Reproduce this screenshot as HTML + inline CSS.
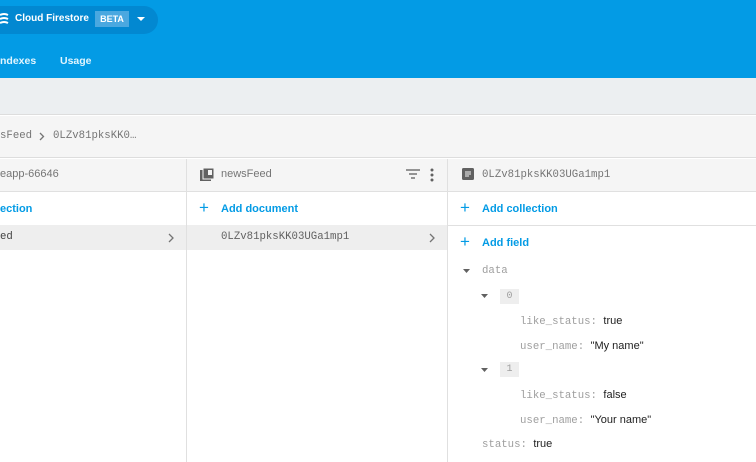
<!DOCTYPE html>
<html><head><style>
*{margin:0;padding:0;box-sizing:border-box}
body{width:756px;height:462px;overflow:hidden;background:#fff;font-family:"Liberation Sans",sans-serif;position:relative}
.a{position:absolute;white-space:nowrap}
.mono{font-family:"Liberation Mono",monospace}
.blue{color:#039be5;font-weight:bold;font-size:11px}
.plus{color:#039be5;font-size:17px;font-weight:normal}
.g{color:#9e9e9e}
.v{color:#212121;font-size:11px;font-family:"Liberation Sans",sans-serif}
</style></head><body>
<div class="a" style="left:0;top:0;width:756px;height:78px;background:#039be5"></div>
<div class="a" style="left:-20px;top:6px;width:178px;height:28px;border-radius:14px;background:#0288d1"></div>
<svg class="a" style="left:0;top:12px" width="10" height="16"><path d="M0 3q4 -2 8 0M0 7q4 -2 8 0M0 11q4 -2 8 0" stroke="#fff" stroke-width="2" fill="none"/></svg>
<div class="a" style="left:15px;top:13px;color:#fff;font-size:10px;font-weight:bold">Cloud Firestore</div>
<div class="a" style="left:95px;top:11px;width:34px;height:16px;background:#4aa8e0;color:#fff;font-size:9px;font-weight:bold;text-align:center;line-height:16px">BETA</div>
<svg class="a" style="left:137px;top:17px" width="8" height="5"><path d="M0 0h8L4 4z" fill="#fff"/></svg>
<div class="a" style="left:0;top:55px;color:#e1f5fe;font-size:10.5px;font-weight:bold">ndexes</div>
<div class="a" style="left:60px;top:55px;color:#e1f5fe;font-size:10.5px;font-weight:bold">Usage</div>
<div class="a" style="left:0;top:78px;width:756px;height:37px;background:#eceff1;border-bottom:1px solid #ddd"></div>
<div class="a" style="left:0;top:116px;width:756px;height:42px;background:#f5f5f5;border-bottom:1px solid #ddd"></div>
<div class="a mono" style="left:0;top:130px;font-size:10.7px;color:#757575">sFeed</div>
<svg class="a" style="left:39px;top:132px" width="6" height="9"><path d="M1 1l3.5 3.5L1 8" stroke="#757575" stroke-width="1.3" fill="none"/></svg>
<div class="a mono" style="left:53px;top:130px;font-size:10.7px;color:#757575">0LZv81pksKK0…</div>
<div class="a" style="left:0;top:159px;width:756px;height:33px;background:#f5f5f5;border-bottom:1px solid #e0e0e0"></div>
<div class="a" style="left:186px;top:159px;width:1px;height:303px;background:#e0e0e0"></div>
<div class="a" style="left:447px;top:159px;width:1px;height:303px;background:#e0e0e0"></div>
<div class="a" style="left:0;top:168px;font-size:11px;color:#757575">eapp-66646</div>
<div class="a blue" style="left:0;top:203px">ection</div>
<div class="a" style="left:0;top:225px;width:186px;height:25px;background:#eeeeee"></div>
<div class="a mono" style="left:0;top:231px;font-size:10.7px;color:#424242">ed</div>
<svg class="a" style="left:168px;top:233px" width="7" height="10"><path d="M1 1l4 4L1 9" stroke="#757575" stroke-width="1.3" fill="none"/></svg>
<svg class="a" style="left:200px;top:168px" width="14" height="13"><rect x="0" y="2" width="11" height="11" fill="#616161"/><rect x="3" y="0" width="11" height="11" fill="#616161" stroke="#f5f5f5"/><rect x="8" y="2" width="4" height="5" fill="#f5f5f5"/></svg>
<div class="a" style="left:221px;top:168px;font-size:11px;color:#757575">newsFeed</div>
<svg class="a" style="left:406px;top:169px" width="14" height="11"><path d="M0 1h14M3 5h8M5 9h4" stroke="#757575" stroke-width="1.5"/></svg>
<svg class="a" style="left:430px;top:168px" width="4" height="14"><circle cx="2" cy="2" r="1.5" fill="#616161"/><circle cx="2" cy="7" r="1.5" fill="#616161"/><circle cx="2" cy="12" r="1.5" fill="#616161"/></svg>
<div class="a plus" style="left:199px;top:198px">+</div>
<div class="a blue" style="left:221px;top:203px">Add document</div>
<div class="a" style="left:187px;top:225px;width:260px;height:25px;background:#eeeeee"></div>
<div class="a mono" style="left:221px;top:231px;font-size:10.7px;color:#616161">0LZv81pksKK03UGa1mp1</div>
<svg class="a" style="left:429px;top:233px" width="7" height="10"><path d="M1 1l4 4L1 9" stroke="#757575" stroke-width="1.3" fill="none"/></svg>
<svg class="a" style="left:462px;top:168px" width="12" height="12"><rect width="12" height="12" rx="1.5" fill="#616161"/><path d="M3 4h6M3 6h6M3 8h4" stroke="#f5f5f5"/></svg>
<div class="a mono" style="left:482px;top:169px;font-size:10.7px;color:#757575">0LZv81pksKK03UGa1mp1</div>
<div class="a plus" style="left:460px;top:198px">+</div>
<div class="a blue" style="left:482px;top:203px">Add collection</div>
<div class="a" style="left:448px;top:225px;width:308px;height:1px;background:#e0e0e0"></div>
<div class="a plus" style="left:460px;top:232px">+</div>
<div class="a blue" style="left:482px;top:237px">Add field</div>
<svg class="a" style="left:463px;top:269px" width="8" height="5"><path d="M0 0h7L3.5 4z" fill="#616161"/></svg>
<div class="a mono g" style="left:482px;top:265px;font-size:10.7px">data</div>
<svg class="a" style="left:481px;top:294px" width="8" height="5"><path d="M0 0h7L3.5 4z" fill="#616161"/></svg>
<div class="a mono g" style="left:500px;top:289px;width:19px;height:15px;background:#eeeeee;font-size:10px;text-align:center;line-height:15px">0</div>
<div class="a mono g" style="left:520px;top:315px;font-size:10.7px">like_status: <span class="v">true</span></div>
<div class="a mono g" style="left:520px;top:340px;font-size:10.7px">user_name: <span class="v">"My name"</span></div>
<svg class="a" style="left:481px;top:368px" width="8" height="5"><path d="M0 0h7L3.5 4z" fill="#616161"/></svg>
<div class="a mono g" style="left:500px;top:362px;width:19px;height:15px;background:#eeeeee;font-size:10px;text-align:center;line-height:15px">1</div>
<div class="a mono g" style="left:520px;top:389px;font-size:10.7px">like_status: <span class="v">false</span></div>
<div class="a mono g" style="left:520px;top:414px;font-size:10.7px">user_name: <span class="v">"Your name"</span></div>
<div class="a mono g" style="left:482px;top:438px;font-size:10.7px">status: <span class="v">true</span></div>
</body></html>
